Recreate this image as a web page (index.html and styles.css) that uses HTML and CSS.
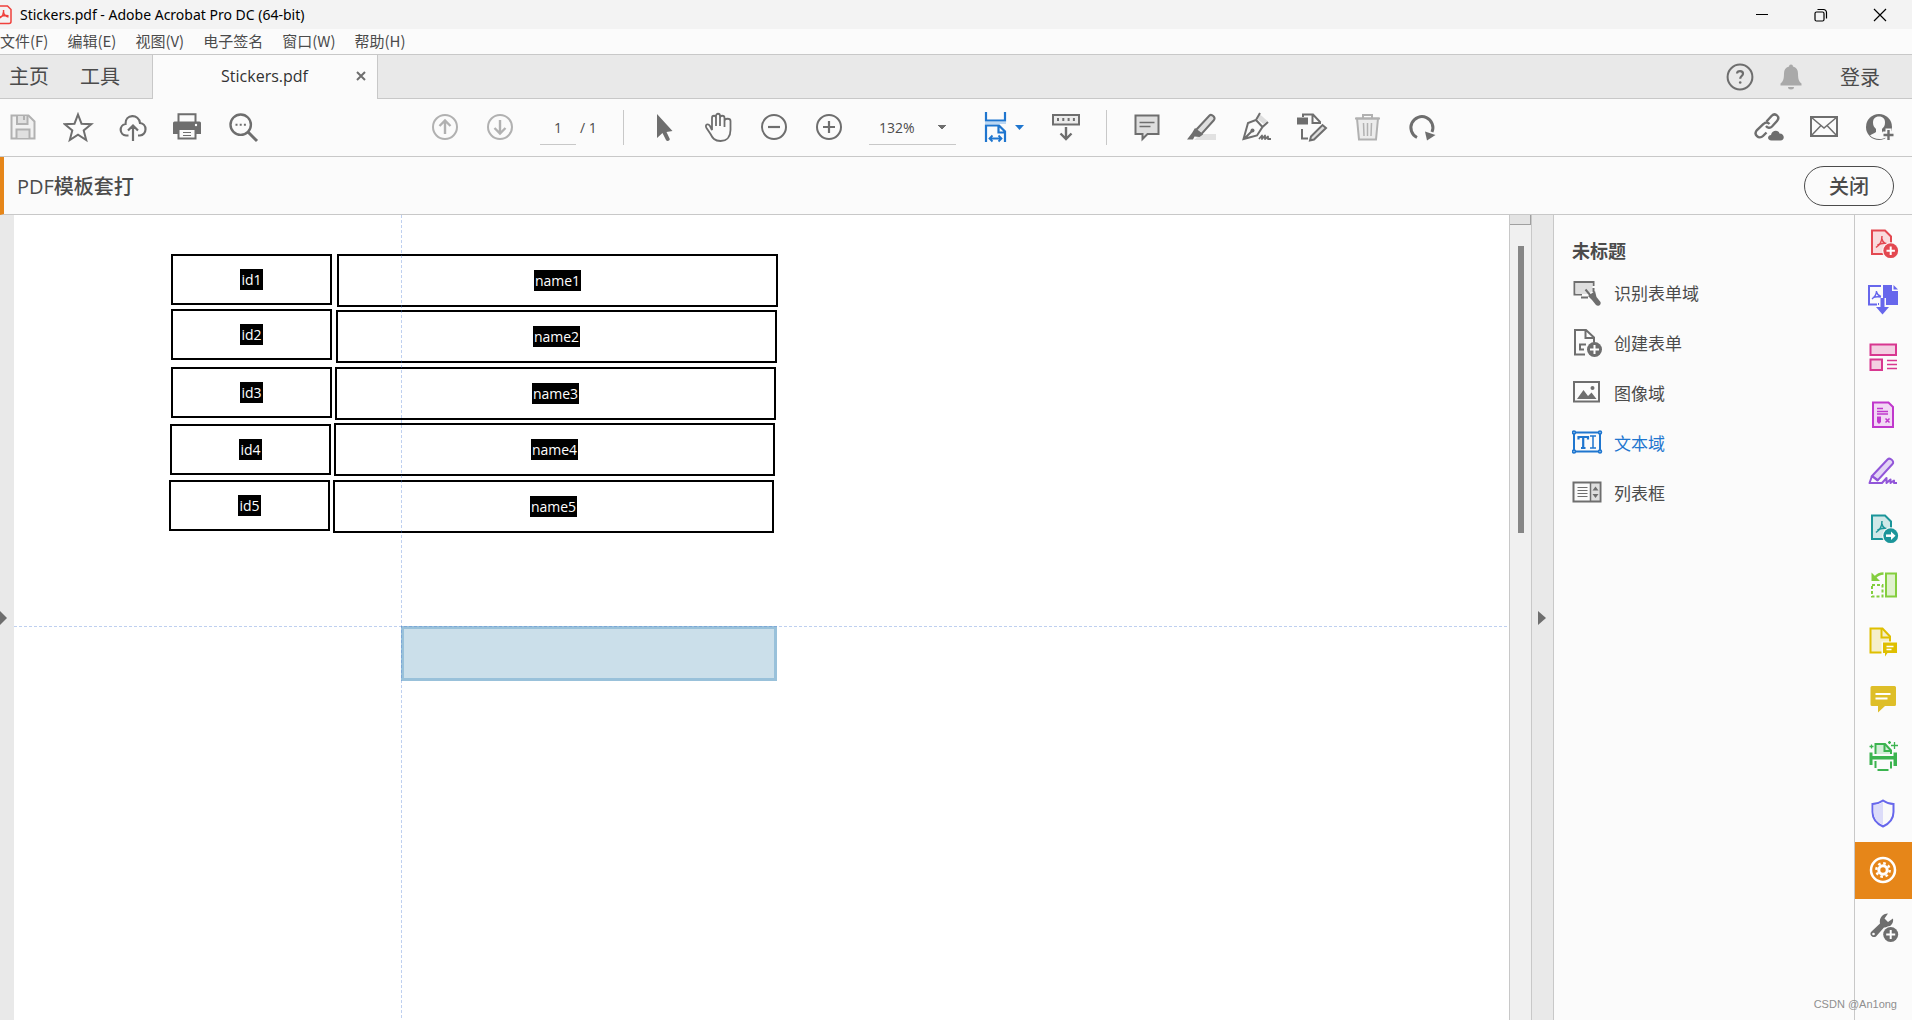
FILE: index.html
```html
<!DOCTYPE html>
<html lang="zh-CN">
<head>
  <meta charset="UTF-8" />
  <meta name="viewport" content="width=device-width, initial-scale=1.0"/>
  <title>Stickers.pdf - Adobe Acrobat Pro DC (64-bit)</title>
  <link rel="stylesheet" href="styles.css">
</head>
<body>

<header class="titlebar">
  <svg class="app-icon" width="12" height="20" viewBox="0 0 12 20" fill="none" stroke="#f0413c">
    <path d="M0 1h7.500L11 4.500V16.500a2 2 0 0 1-2 2H0" stroke-width="1.500"/>
    <path d="M0 13c2-1.500 4-5 3.500-8M3.500 7c.5 3 2.500 4.500 5 5M0 12c3-1.500 5-2 8.500-1.200" stroke-width="1.500"/>
  </svg>
  <span class="window-title">Stickers.pdf - Adobe Acrobat Pro DC (64-bit)</span>
  <div class="window-buttons">
    <button type="button" aria-label="Minimize"><svg width="14" height="14" viewBox="0 0 14 14"><path d="M1 6.500h12" stroke="#000"/></svg></button>
    <button type="button" aria-label="Restore"><svg width="14" height="14" viewBox="0 0 14 14" fill="none" stroke="#000" stroke-width="1.200"><rect x="1" y="4" width="9" height="9" rx="1.500"/><path d="M3.500 1.500H9.500a3 3 0 0 1 3 3V10.500"/></svg></button>
    <button type="button" aria-label="Close"><svg width="14" height="14" viewBox="0 0 14 14"><path d="M1 1l12 12M13 1L1 13" stroke="#000" stroke-width="1.200"/></svg></button>
  </div>
</header>

<nav class="menubar">
  <button type="button">文件(F)</button>
  <button type="button">编辑(E)</button>
  <button type="button">视图(V)</button>
  <button type="button">电子签名</button>
  <button type="button">窗口(W)</button>
  <button type="button">帮助(H)</button>
</nav>

<div class="tabbar">
  <div class="home-tabs">
    <button type="button">主页</button>
    <button type="button">工具</button>
  </div>
  <div class="doc-tab">
    <span class="doc-name">Stickers.pdf</span>
    <button type="button" class="tab-close" aria-label="Close tab"><svg width="10" height="10" viewBox="0 0 10 10"><path d="M1 1l8 8M9 1L1 9" stroke="#6e6e6e" stroke-width="2"/></svg></button>
  </div>
  <div class="account">
    <button type="button" aria-label="Help"><svg width="28" height="28" viewBox="0 0 28 28" fill="none" stroke="#6e6e6e"><circle cx="14" cy="14" r="12.400" stroke-width="2"/><path d="M11 10.500c.3-3.200 6-3.300 6 .2 0 2.300-2.800 2.400-2.800 5" stroke-width="2.200"/><circle cx="14.200" cy="19.500" r="1.300" fill="#6e6e6e" stroke="none"/></svg></button>
    <button type="button" aria-label="Notifications"><svg width="24" height="28" viewBox="0 0 24 28" fill="#a9a9a9"><path d="M12 1.500a2 2 0 0 1 2 2c3.500 1 5 3.500 5 7 0 6 1 8 3.500 10v2h-21v-2C4 18.500 5 16.500 5 10.500c0-3.500 1.500-6 5-7a2 2 0 0 1 2-2zM9 24h6a3 2.500 0 0 1-6 0z"/></svg></button>
    <button type="button" class="sign-in">登录</button>
  </div>
</div>

<div class="toolbar">
  <div class="tools tools-file">
    <button type="button" class="dim" aria-label="Save"><svg class="ico" viewBox="0 0 31 31"><path d="M3.500 3.500h17l6 6v17h-23z" fill="#f1f1f1"/><path d="M9 4v8h10.500V4M16 4v4M8.500 26v-8.500h13V26" fill="#e0e0e0"/></svg></button>
    <button type="button" aria-label="Star"><svg class="ico" viewBox="0 0 31 31"><path d="M15 2.500l3.500 9.200 9.800.5-7.600 6.200 2.500 9.700-8.200-5.400-8.200 5.400 2.500-9.700-7.600-6.200 9.800-.5z"/></svg></button>
    <button type="button" aria-label="Upload"><svg class="ico" viewBox="0 0 31 31"><path d="M10.500 23.500H8A5.800 5.800 0 0 1 7.500 12C7 2 21 1.500 22 11a6.300 6.300 0 0 1 0 12.500h-2M15 29V14M10 18.500l5-5 5 5" stroke-width="2.200"/></svg></button>
    <button type="button" aria-label="Print"><svg class="ico" viewBox="0 0 31 31"><path d="M5.500 10V2.200h17V10"/><path d="M1.500 9.500h25a1.500 1.500 0 0 1 1.500 1.500v11h-5v-5.500H5V22H0V11a1.500 1.500 0 0 1 1.500-1.500z" fill="#6e6e6e" stroke="none"/><path d="M5.500 17h17v9.500h-17z" fill="#fafafa"/><path d="M10 20.500h8M10 23.500h8" stroke-width="1.200"/><circle cx="23" cy="13" r="1.200" fill="#fff" stroke="none"/></svg></button>
    <button type="button" aria-label="Find"><svg class="ico" viewBox="0 0 31 31"><circle cx="12.700" cy="12.700" r="10.200" stroke-width="2.400"/><path d="M20 20l9 9" stroke-width="3"/><path d="M7.500 12.700h2M11.700 12.700h2M15.900 12.700h2"/></svg></button>
  </div>
  <div class="tools">
    <button type="button" class="dim" aria-label="Previous page"><svg class="ico" viewBox="0 0 31 31"><circle cx="15" cy="15" r="12"/><path d="M15 22V9M9.500 14L15 8.500l5.500 5.500" stroke-width="2.400"/></svg></button>
    <button type="button" class="dim" aria-label="Next page"><svg class="ico" viewBox="0 0 31 31"><circle cx="15" cy="15" r="12"/><path d="M15 8v13M9.500 16l5.500 5.500 5.500-5.500" stroke-width="2.400"/></svg></button>
    <div class="page-number">
      <input type="text" value="1" aria-label="Page number">
      <span>/ 1</span>
    </div>
  </div>
  <div class="tools tools-view">
    <button type="button" aria-label="Select"><svg class="ico" viewBox="0 0 31 31"><path d="M8 2v24l5.500-5 3.500 7c1 2 4.500.5 3.700-1.300L17.500 20l6-1z" fill="#6e6e6e" stroke="none"/></svg></button>
    <button type="button" aria-label="Pan"><svg class="ico" viewBox="0 0 31 31"><path d="M8 18V6c0-3 4-3 4 0V4c0-3 4-3 4 0v2c0-3 4.500-3 4.500 0v3c0-3 6-3 6 0v9c0 6-3 11-10 11-6 0-8-3-10-7l-4-6c-2-3.500 1.500-5 3.500-2zM12 6v8M16 5v9M20.500 7v8" stroke-width="1.800"/></svg></button>
    <button type="button" aria-label="Zoom out"><svg class="ico" viewBox="0 0 31 31"><circle cx="15" cy="15" r="12"/><path d="M9 15h12" stroke-width="2.200"/></svg></button>
    <button type="button" aria-label="Zoom in"><svg class="ico" viewBox="0 0 31 31"><circle cx="15" cy="15" r="12"/><path d="M9 15h12M15 9v12" stroke-width="2.200"/></svg></button>
    <select class="zoom-level" aria-label="Zoom">
      <option>132%</option>
    </select>
    <button type="button" class="fit-page" aria-label="Fit width"><svg width="44" height="31" viewBox="0 0 44 31" fill="none" stroke="#1f76cf" stroke-width="2.200"><path d="M6 0v8.500h19V0"/><path d="M5 11h21" stroke="#a8cdf0" stroke-width="1.500"/><path d="M6 30V13.500h13l6 6V30M18.500 14v6.500H25"/><path d="M10 26.500h11M12.500 23.500l-3 3 3 3M18.500 23.500l3 3-3 3" stroke-width="1.800"/><path d="M35 13h9l-4.500 5z" fill="#1f76cf" stroke="none"/></svg></button>
    <button type="button" aria-label="Scroll mode"><svg class="ico" viewBox="0 0 31 31"><rect x="2" y="3" width="26" height="9.500" fill="#ececec"/><path d="M6 7.500h18" stroke-dasharray="2 3.300" stroke-width="3"/><path d="M15 15v11M9.500 21.500l5.500 5.500 5.500-5.500" stroke-width="2.400"/></svg></button>
  </div>
  <div class="tools tools-edit">
    <button type="button" aria-label="Comment"><svg class="ico" viewBox="0 0 31 31"><path d="M3.500 3.500h23v18.500H15.500l-5 5V22h-7z" fill="#dedede"/><path d="M7.500 10.500h15M7.500 14.500h11" stroke-width="1.500"/></svg></button>
    <button type="button" aria-label="Highlight"><svg class="ico" viewBox="0 0 31 31"><path d="M14 22h15v6H7z" fill="#e1e1e1" stroke="none"/><path d="M9 18L22.500 3.500c2-2 6.500 2 4.500 4.500L14.500 22z" fill="#dedede"/><path d="M8 16l8 6.500-3.500 2.500-5-.5-1.500 3H0l5-6.500z" fill="#6e6e6e" stroke="none"/></svg></button>
    <button type="button" aria-label="Sign"><svg class="ico" viewBox="0 0 31 31"><path d="M17.500 2l8 7-4 3-6-5z" fill="#dedede" stroke="none"/><path d="M18 1l-4 7-8 3-4.500 16L15 23.500l5.500-8.500 5.500-5M14 8l6.500 7M2 27l8-8"/><circle cx="10.500" cy="18.500" r="2" fill="#6e6e6e" stroke="none"/><path d="M17 27l3-3.500v3.500l3-3.500v3.500l3-2.500V27h3" stroke-width="1.800" stroke-linejoin="round"/></svg></button>
    <button type="button" aria-label="Organize"><svg class="ico" viewBox="0 0 31 31"><path d="M6 5V2.500h10l7.500 8M15.500 2.500V11H24M5 17v9.500h6"/><path d="M0 5.500h11v7H0z" fill="#6e6e6e" stroke="none"/><path d="M14 24.500L25.500 13l3.500 3-12 11.500-4 1z" fill="#dedede" stroke-width="2"/></svg></button>
    <button type="button" class="dim" aria-label="Delete"><svg class="ico" viewBox="0 0 31 31"><path d="M5 6.500h21l-2 21H7z" fill="#ececec"/><path d="M3 6.500h25M11 6V3h9v3" /><path d="M11.500 11l.5 13M15.500 11v13M19.500 11l-.5 13" stroke-width="1.500"/></svg></button>
    <button type="button" aria-label="Rotate"><svg class="ico" viewBox="0 0 31 31"><path d="M10 25.500A11 11 0 1 1 25 20" stroke-width="3"/><path d="M18 19.500l10.500 3.500-8.500 5.500z" fill="#6e6e6e" stroke="none"/></svg></button>
  </div>
  <div class="tools tools-share">
    <button type="button" aria-label="Share link"><svg class="ico" viewBox="0 0 31 31"><path d="M12.500 9.500l5-5.500c4-4 9 1 5.500 5l-5 5.500c-2 2-4.500 1.500-6-.5M15.500 12c-2-2-4-2-6 0L3 18c-4 4.500 2 10 6 6l3.500-3.500" stroke-width="2.400"/><path d="M17.500 28.500c-5 0-4-5.500-.5-5.500 1-5.500 8-5 8.500-1.500 5.500 0 5.500 7 1 7z" fill="#6e6e6e" stroke="none"/></svg></button>
    <button type="button" aria-label="Mail"><svg class="ico" viewBox="0 0 31 31"><path d="M2 5h26v19H2z"/><path d="M2 5l13 11L28 5M2 24l9.500-10M28 24l-9.500-10" stroke-width="1.500"/></svg></button>
    <button type="button" aria-label="Add people"><svg class="ico" viewBox="0 0 31 31"><circle cx="15" cy="15" r="13" fill="#6e6e6e" stroke="none"/><path d="M15 4.500c-4 0-6 2.500-6 6 0 3 1 4.500 3 6.500v3c-2 1.500-4 2-6 3.500 4 4 12 5 17 1l-1-2-4-2.500v-3c2-2 3-3.500 3-6.500 0-3.500-2-6-6-6z" fill="#fafafa" stroke="none"/><path d="M24.500 16.500v12M18.500 22.500h12" stroke="#fafafa" stroke-width="6"/><path d="M24.500 18v10M19.500 23h10" stroke-width="2.400"/></svg></button>
  </div>
</div>

<div class="tool-header">
  <h1>PDF模板套打</h1>
  <button type="button" class="close-tool">关闭</button>
</div>

<main class="workspace">
  <button type="button" class="gutter" aria-label="Show left pane"><svg width="7" height="14" viewBox="0 0 7 14"><path d="M0 0v14l7-7z" fill="#6e6e6e"/></svg></button>

  <section class="page">
    <button type="button" class="field field-id row-1"><span>id1</span></button>
    <button type="button" class="field field-name row-1"><span>name1</span></button>
    <button type="button" class="field field-id row-2"><span>id2</span></button>
    <button type="button" class="field field-name row-2"><span>name2</span></button>
    <button type="button" class="field field-id row-3"><span>id3</span></button>
    <button type="button" class="field field-name row-3"><span>name3</span></button>
    <button type="button" class="field field-id row-4"><span>id4</span></button>
    <button type="button" class="field field-name row-4"><span>name4</span></button>
    <button type="button" class="field field-id row-5"><span>id5</span></button>
    <button type="button" class="field field-name row-5"><span>name5</span></button>
    <div class="new-field"></div>
    <div class="guide guide-x"></div>
    <div class="guide guide-y"></div>
  </section>

  <div class="scrollbar">
    <div class="scroll-split"></div>
    <div class="scroll-thumb"></div>
  </div>

  <button type="button" class="collapse" aria-label="Hide tools pane"><svg width="8" height="14" viewBox="0 0 8 14"><path d="M0 0v14l8-7z" fill="#6e6e6e"/></svg></button>

  <aside class="panel">
    <h2>未标题</h2>
    <button type="button"><svg class="ico" viewBox="0 0 31 31"><path d="M10 17.500H2.500V5h19v4" fill="none"/><path d="M3.500 6h17v8l-4 3h-13z" fill="#dedede" stroke="none"/><path d="M21.500 11v4M9 20.500h7M13.500 12.500l5 6"/><path d="M16 19l7-5 1.500 6 4 5c1 3-2.500 5-4.500 3l-4-5z" fill="#6e6e6e" stroke="none"/></svg>识别表单域</button>
    <button type="button"><svg class="ico" viewBox="0 0 31 31"><path d="M13 27.500H3V3h11l8 7.500v5M13.500 3v8H22M14 17.500H8v5h4"/><circle cx="22.500" cy="22.500" r="7.500" fill="#6e6e6e" stroke="none"/><path d="M22.500 18v9M18 22.500h9" stroke="#fff"/></svg>创建表单</button>
    <button type="button"><svg class="ico" viewBox="0 0 31 31"><rect x="2" y="5" width="25" height="19.500"/><path d="M5 22l6.500-9 4.500 6 3.500-3.500 5 6.500z" fill="#6e6e6e" stroke="none"/><circle cx="20.500" cy="11" r="2" fill="#6e6e6e" stroke="none"/></svg>图像域</button>
    <button type="button" class="active"><svg class="ico" viewBox="0 0 31 31"><rect x="2" y="5.500" width="26" height="19"/><path d="M6.500 12.500V10H16v2.500M11.200 10v11M9 21h4.500" stroke-width="2.200"/><path d="M18 9h6M21 9v12M18 21h6" stroke-width="1.500"/><g fill="#9ac5ee" stroke-width="1.500"><circle cx="2" cy="5.500" r="1.500"/><circle cx="28" cy="5.500" r="1.500"/><circle cx="2" cy="24.500" r="1.500"/><circle cx="28" cy="24.500" r="1.500"/></g></svg>文本域</button>
    <button type="button"><svg class="ico" viewBox="0 0 31 31"><path d="M18 6h9v18h-9z" fill="#dedede" stroke="none"/><rect x="1.500" y="5.500" width="27" height="19"/><path d="M18.500 6v18" stroke-width="1.500"/><path d="M5.500 10.500h10M5.500 13.500h10M5.500 16.500h10M5.500 19.500h10" stroke-width="1.200"/><path d="M20.500 13.500h6l-3-4zM20.500 17h6l-3 4z" fill="#6e6e6e" stroke="none"/></svg>列表框</button>
  </aside>

  <nav class="rail">
    <button type="button" aria-label="Create PDF"><svg viewBox="0 0 33 33" stroke="#e34850"><path d="M5 3.500h13l6 6V27H5z" fill="#f9dcdd"/><path d="M15 9c0 7-3 9-6 11.500M15 12c1 4 3 5 6 5.500M10.500 18c3-1.500 5-2 9-1.500" stroke-width="1.500"/><circle cx="23.700" cy="23.700" r="8.500" fill="#fafafa" stroke="none"/><circle cx="23.700" cy="23.700" r="7.400" fill="#e34850" stroke="none"/><path d="M23.700 19.500v8.400M19.500 23.700h8.400" stroke="#fff"/></svg></button>
    <button type="button" aria-label="Export PDF"><svg viewBox="0 0 33 33" stroke="#6767ec"><path d="M14 2H2v18.500h8M11 20h6"/><path d="M9.500 7c0 4-2 6-4.500 8M9.500 8c1 3 2 4 4.500 4.500M6 13.500c3-1 4-1 8-.5" stroke-width="1.400"/><path d="M16 1h9v6h6v14H19v-7h-3z" fill="#6767ec" stroke="none"/><path d="M26.500 1l4.500 4.500h-4.500z" fill="#6767ec" stroke="none"/><path d="M15.500 14v10" stroke="#fafafa" stroke-width="7"/><path d="M15.500 14v10" stroke-width="4"/><path d="M9 23h13l-6.500 7.500z" fill="#6767ec" stroke="none"/></svg></button>
    <button type="button" aria-label="Edit PDF"><svg viewBox="0 0 33 33" stroke="#d83790"><rect x="3.500" y="3.500" width="25.500" height="10.500" fill="#f3cfe2"/><rect x="3.500" y="18.500" width="11.500" height="10.500" fill="#f3cfe2"/><path d="M20 19.500h10M20 23.500h10M20 27.500h10" stroke-width="1.500"/></svg></button>
    <button type="button" aria-label="Prepare form"><svg viewBox="0 0 33 33" stroke="#c038cc"><path d="M6 4.500h15.500L26 9v20H6z" fill="#f2d8f5"/><path d="M10 10.500h6M10 13.500h11M10 16h11M18.500 20.500l4 4M22.500 20.500l-4 4" stroke-width="1.500"/><path d="M10 18.500h4V24l-2 2-2-2z" fill="#c038cc" stroke="none"/></svg></button>
    <button type="button" aria-label="Sign"><svg viewBox="0 0 33 33" stroke="#9256d9"><path d="M5 21L20.500 4.500c2.500-2.500 7.500 2 5 4.500L11 25z" fill="#e3d5f5"/><path d="M5 21L2.500 28H15l4.500-5v5l4-3.500V28l3.500-2.500V28h3M5 21l6 5" stroke-linejoin="round"/></svg></button>
    <button type="button" aria-label="Share PDF"><svg viewBox="0 0 33 33" stroke="#1b959a"><path d="M5 3.500h13l6 6V27H5z" fill="#cfe8e8"/><path d="M15 9c0 7-3 9-6 11.500M15 12c1 4 3 5 6 5.500M10.500 18c3-1.500 5-2 9-1.500" stroke-width="1.500"/><circle cx="23.700" cy="23.700" r="8.500" fill="#fafafa" stroke="none"/><circle cx="23.700" cy="23.700" r="7.400" fill="#1b959a" stroke="none"/><path d="M19 23.700h6" stroke="#fff" stroke-width="2.500"/><path d="M24 19.500v8.400l4.500-4.200z" fill="#fff" stroke="none"/></svg></button>
    <button type="button" aria-label="Organize pages"><svg viewBox="0 0 33 33" stroke="#84ce3e"><rect x="19" y="4.500" width="10" height="23" fill="#e0f1ce"/><rect x="5" y="16" width="10.500" height="11.500" stroke-dasharray="3 2"/><path d="M16.500 4.500c-4 0-6 1-8.500 4" stroke-width="2.500"/><path d="M4.500 3.500v8.500H13z" fill="#84ce3e" stroke="none"/></svg></button>
    <button type="button" aria-label="Review"><svg viewBox="0 0 33 33" stroke="#dfbf00"><path d="M3.500 2.500h12l7.500 8V26.500H3.500z" fill="#f5efc9"/><path d="M14.500 3v8.500H23"/><path d="M14.500 15.500H31V31H14.500z" fill="#fafafa" stroke="none"/><path d="M16 16.500h14V27h-9.500l-2.500 3.500V27h-2z" fill="#dfbf00" stroke="none"/><path d="M19.500 20.500h7M19.500 23.500h5" stroke="#fff" stroke-width="1.500"/></svg></button>
    <button type="button" aria-label="Comment"><svg viewBox="0 0 33 33"><path d="M5 3h22.500a1.500 1.500 0 0 1 1.500 1.500v17a1.500 1.500 0 0 1-1.500 1.500H18l-7 6.500V23H5a1.500 1.500 0 0 1-1.500-1.500v-17A1.500 1.500 0 0 1 5 3z" fill="#debe28"/><path d="M8.500 11h15M8.500 15.500h12" stroke="#fff"/></svg></button>
    <button type="button" aria-label="Scan"><svg viewBox="0 0 33 33" stroke="#3bb44f"><path d="M8.500 14V4H18l6 6.500V14" fill="#d3eed8"/><path d="M17.500 4v7H24"/><path d="M2.500 12.500h3V16h21v-3.500h3.500V26h-3.500v-6.500h-21V25h-3z" fill="#3bb44f" stroke="none"/><path d="M8.500 21v9h15.500v-9" stroke-dasharray="7 4 11 4 7"/><path d="M27.500 2v7M24 5.500h7M4.500 4.500v4M2.500 6.500h4M22.500 1v3M21 2.500h3" stroke-width="1.300"/></svg></button>
    <button type="button" aria-label="Protect"><svg viewBox="0 0 33 33" stroke="#6767ec"><path d="M16 3.500c3.500 2.500 7 3.500 10.500 3.500v8c0 7-4 11.500-10.500 14.500C9.500 26.500 5.500 22 5.500 15V7C9 7 12.500 6 16 3.500z" fill="#fafafa"/><path d="M16 5C12.500 7.200 10 8 6.700 8v7c0 6 3.300 10 9.300 13z" fill="#dcdcf9" stroke="none"/></svg></button>
    <button type="button" class="current" aria-label="Custom tool"><svg viewBox="0 0 33 33" stroke="#fff"><circle cx="16" cy="16" r="12" stroke-width="2.500"/><circle cx="16" cy="16" r="4.200" stroke-width="3"/><circle cx="16" cy="16" r="6.700" stroke-width="2.400" stroke-dasharray="2.630 2.630"/></svg></button>
    <button type="button" aria-label="More tools"><svg viewBox="0 0 33 33"><path d="M4 21l9-8.500C12 7 15.500 2.500 21 2.500l-3.500 5 3.500 3.500 5-3.500c1 5-3 9.500-9 9L9 25.500c-3 2-7-1.500-5-4.500z" fill="#6e6e6e"/><circle cx="6.500" cy="23" r="1.300" fill="#fafafa"/><circle cx="23.700" cy="23.500" r="8.500" fill="#fafafa"/><circle cx="23.700" cy="23.500" r="7.500" fill="#6e6e6e"/><path d="M23.700 19v9M19.200 23.500h9" stroke="#fff"/></svg></button>
  </nav>
</main>

<div class="watermark">CSDN @An1ong</div>

</body>
</html>
```

FILE: styles.css
```css
* {
  box-sizing: border-box;
}

body {
  margin: 0;
  height: 100vh;
  display: flex;
  flex-direction: column;
  overflow: hidden;
  background: #fbfbfb;
  color: #4b4b4b;
  font-family: "Open Sans", "Noto Sans CJK SC", sans-serif;
  font-size: 14px;
}

button {
  display: flex;
  align-items: center;
  justify-content: center;
  padding: 0;
  border: none;
  background: none;
  color: inherit;
  font: inherit;
  white-space: nowrap;
  cursor: pointer;
}

svg {
  display: block;
  flex: none;
}

.ico {
  width: 31px;
  height: 31px;
  fill: none;
  stroke: #6e6e6e;
  stroke-width: 2;
}

/* window title and menu */
.titlebar {
  display: flex;
  align-items: center;
  flex: none;
  height: 29px;
  background: #f3f3f3;
  color: #000;
}

.window-title {
  margin-left: 8px;
  font-family: "Noto Sans", sans-serif;
}

.window-buttons {
  display: flex;
  gap: 45px;
  margin-left: auto;
  padding-right: 25px;
}

.menubar {
  display: flex;
  flex: none;
  gap: 19px;
  height: 26px;
  padding-bottom: 2px;
  border-bottom: 1px solid #c8c8c8;
  font-size: 15px;
  font-family: "Noto Sans CJK SC", sans-serif;
}

/* tabs */
.tabbar {
  display: flex;
  flex: none;
  height: 44px;
  background: #e9e9e9;
}

.home-tabs {
  display: flex;
  gap: 31px;
  width: 152px;
  padding: 0 0 2px 9px;
  border-bottom: 1px solid #c8c8c8;
  font-size: 20px;
}

.doc-tab {
  display: flex;
  align-items: center;
  justify-content: flex-end;
  gap: 48px;
  width: 226px;
  padding: 0 11px 2px 0;
  border-left: 1px solid #c8c8c8;
  border-right: 1px solid #c8c8c8;
  background: #fbfbfb;
  font-size: 16px;
  color: #323232;
}

.account {
  display: flex;
  flex: 1;
  justify-content: flex-end;
  gap: 25px;
  padding-right: 32px;
  border-bottom: 1px solid #c8c8c8;
}

.sign-in {
  margin-left: 12px;
  font-size: 20px;
}

/* toolbar */
.toolbar {
  display: flex;
  align-items: center;
  flex: none;
  height: 58px;
  padding: 0 17px 0 8px;
  border-bottom: 1px solid #c8c8c8;
}

.tools {
  display: flex;
  align-items: center;
  gap: 24px;
}

.tools-file {
  margin-right: 171px;
}

.tools-view,
.tools-edit {
  height: 35px;
  margin-left: 26px;
  padding-left: 25px;
  border-left: 1px solid #c8c8c8;
}

.tools-edit {
  margin-left: 24px;
}

.tools-share {
  margin-left: auto;
}

.dim .ico {
  stroke: #b1b1b1;
}

.page-number {
  display: flex;
  align-items: center;
  gap: 4px;
  width: 57px;
  white-space: nowrap;
}

.page-number input {
  width: 36px;
  height: 34px;
  padding: 0;
  border: none;
  border-bottom: 1px solid #c8c8c8;
  background: none;
  color: inherit;
  font: inherit;
  text-align: center;
}

.zoom-level {
  width: 87px;
  height: 34px;
  padding: 0 10px;
  border: none;
  border-bottom: 1px solid #c8c8c8;
  border-radius: 0;
  appearance: none;
  background-color: transparent;
  background-image:
    linear-gradient(45deg, transparent 50%, #6e6e6e 50%),
    linear-gradient(135deg, #6e6e6e 50%, transparent 50%);
  background-position: right 14px center, right 10px center;
  background-size: 4px 5px;
  background-repeat: no-repeat;
  color: inherit;
  font: inherit;
}

.fit-page {
  justify-content: flex-start;
  width: 47px;
}

/* custom tool header */
.tool-header {
  display: flex;
  align-items: center;
  justify-content: space-between;
  flex: none;
  height: 58px;
  padding: 0 18px 0 13px;
  border-left: 4px solid #e68619;
  border-bottom: 1px solid #c8c8c8;
}

.tool-header h1 {
  margin: 0;
  font-size: 20px;
  font-weight: 500;
}

.close-tool {
  width: 90px;
  height: 40px;
  border: 1px solid #4b4b4b;
  border-radius: 20px;
  font-size: 20px;
  font-weight: 500;
}

/* document area */
.workspace {
  display: flex;
  flex: 1;
  min-height: 0;
}

.gutter {
  justify-content: flex-start;
  width: 14px;
  background: #e9e9e9;
}

.page {
  position: relative;
  flex: 1;
  overflow: hidden;
  background: #fff;
}

.field {
  position: absolute;
  border: 2px solid #000;
}

.field span {
  padding: 0 1px;
  background: #000;
  color: #fff;
  line-height: 21px;
}

.field-id {
  left: 157px;
  width: 161px;
  height: 51px;
}

.field-name {
  left: 321px;
  width: 441px;
  height: 53px;
}

.row-1 { top: 39px; }
.row-2 { top: 95px; }
.row-3 { top: 152px; }
.row-4 { top: 208px; }
.row-5 { top: 265px; }

.field-name.row-1 { left: 323px; }
.field-name.row-2 { left: 322px; }
.field-name.row-4 { left: 320px; }
.field-name.row-5 { left: 319px; }
.field-id.row-2 { top: 94px; }
.field-id.row-4 { left: 156px; top: 209px; }
.field-id.row-5 { left: 155px; }

.new-field {
  position: absolute;
  left: 387px;
  top: 411px;
  width: 376px;
  height: 55px;
  border: 3px solid #99c1da;
  background: #cbdfea;
}

.guide {
  position: absolute;
}

.guide-x {
  left: 387px;
  top: 0;
  bottom: 0;
  width: 1px;
  background: repeating-linear-gradient(to bottom, rgba(70, 120, 210, 0.35) 0 3px, transparent 3px 5px);
}

.guide-y {
  left: 0;
  right: 0;
  top: 411px;
  height: 1px;
  background: repeating-linear-gradient(to right, rgba(70, 120, 210, 0.35) 0 3px, transparent 3px 5px);
}

.scrollbar {
  width: 22px;
  border-left: 1px solid #c8c8c8;
  background: #f0f0f0;
}

.scroll-split {
  height: 10px;
  border-right: 1px solid #a0a0a0;
  border-bottom: 1px solid #a0a0a0;
  background: #e3e3e3;
}

.scroll-thumb {
  width: 6px;
  height: 287px;
  margin: 21px 0 0 8px;
  background: #868686;
}

.collapse {
  width: 23px;
  padding-right: 2px;
  border-left: 1px solid #c8c8c8;
  border-right: 1px solid #c8c8c8;
  background: #e9e9e9;
}

/* right side */
.panel {
  width: 300px;
  padding: 24px 18px;
}

.panel h2 {
  margin: 0 0 3px;
  font-size: 18px;
  line-height: 25px;
  font-weight: 700;
}

.panel button {
  gap: 11px;
  height: 50px;
  font-size: 17px;
}

.panel .active {
  color: #1f76cf;
}

.panel .active .ico {
  stroke: #1f76cf;
}

.rail {
  width: 58px;
  border-left: 1px solid #c8c8c8;
}

.rail button {
  width: 100%;
  height: 57px;
}

.rail svg {
  width: 33px;
  height: 33px;
  fill: none;
  stroke-width: 2;
}

.rail .current {
  background: #e68619;
}

.watermark {
  position: absolute;
  right: 15px;
  bottom: 10px;
  color: #8f8f8f;
  font-family: "Liberation Sans", sans-serif;
  font-size: 11px;
}
```
